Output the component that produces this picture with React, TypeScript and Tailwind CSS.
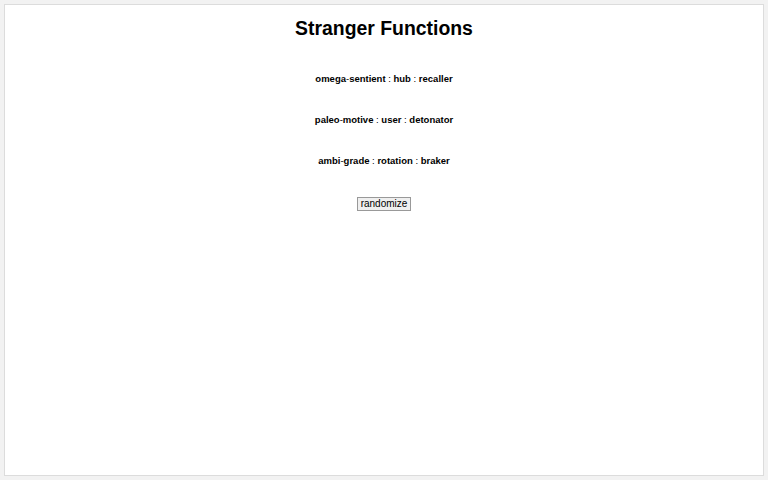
const functions = [
  ["omega", "sentient", "hub", "recaller"],
  ["paleo", "motive", "user", "detonator"],
  ["ambi", "grade", "rotation", "braker"],
];

export default function App() {
  return (
    <div className="min-h-screen bg-[#f2f2f2] p-[4px] font-['Liberation_Sans',Arial,sans-serif] text-black">
      <div className="h-[472px] bg-white border border-[#dcdcdc] flex flex-col items-center">
        <h1 className="mt-[10px] text-[19.4px] leading-[26px] font-bold">Stranger Functions</h1>
        <div className="mt-[31px] flex flex-col items-center gap-[27px]">
          {functions.map(([a, b, c, d]) => (
            <p key={a} className="text-[9.5px] leading-[14px]">
              <b>{a}</b>-<b>{b}</b> : <b>{c}</b> : <b>{d}</b>
            </p>
          ))}
        </div>
        <button className="mt-[29px] px-[3px] h-[14px] text-[10px] leading-[12px] bg-[#efefef] border border-[#999] text-black">
          randomize
        </button>
      </div>
    </div>
  );
}
